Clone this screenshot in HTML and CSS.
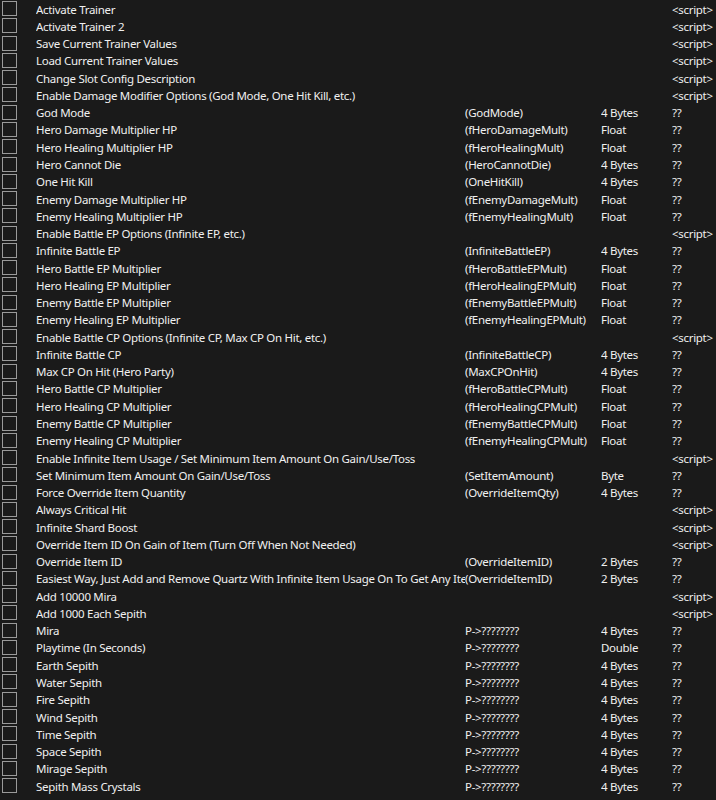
FILE: index.html
```
<!DOCTYPE html>
<html>
<head>
<meta charset="utf-8">
<link rel="stylesheet" href="styles.css">
</head>
<body>
<div class="table" id="t"></div>
<script src="app.js"></script>
</body>
</html>
```
FILE: styles.css
```
html, body {
  margin: 0;
  padding: 0;
  background: #1a1a1a;
}
body {
  width: 716px;
  height: 800px;
  overflow: hidden;
  font-family: "Noto Sans", "Open Sans", sans-serif;
  font-size: 11.5px;
  letter-spacing: -0.3px;
  color: #f0f0f0;
}
.table {
  display: flex;
  flex-direction: column;
}
.row {
  height: 17.27px;
  display: grid;
  grid-template-columns: 36px 429px 136px 71px 1fr;
  align-items: center;
  white-space: nowrap;
}
.cb {
  width: 13px;
  height: 13px;
  margin-left: 2px;
  border: 1px solid #9a9a9a;
  background: #1a1a1a;
}
.desc,
.cell {
  overflow: hidden;
  padding-top: 1px;
}
```
FILE: app.js
```
var rows = [
["Activate Trainer","","","<script>"],
["Activate Trainer 2","","","<script>"],
["Save Current Trainer Values","","","<script>"],
["Load Current Trainer Values","","","<script>"],
["Change Slot Config Description","","","<script>"],
["Enable Damage Modifier Options (God Mode, One Hit Kill, etc.)","","","<script>"],
["God Mode","(GodMode)","4 Bytes","??"],
["Hero Damage Multiplier HP","(fHeroDamageMult)","Float","??"],
["Hero Healing Multiplier HP","(fHeroHealingMult)","Float","??"],
["Hero Cannot Die","(HeroCannotDie)","4 Bytes","??"],
["One Hit Kill","(OneHitKill)","4 Bytes","??"],
["Enemy Damage Multiplier HP","(fEnemyDamageMult)","Float","??"],
["Enemy Healing Multiplier HP","(fEnemyHealingMult)","Float","??"],
["Enable Battle EP Options (Infinite EP, etc.)","","","<script>"],
["Infinite Battle EP","(InfiniteBattleEP)","4 Bytes","??"],
["Hero Battle EP Multiplier","(fHeroBattleEPMult)","Float","??"],
["Hero Healing EP Multiplier","(fHeroHealingEPMult)","Float","??"],
["Enemy Battle EP Multiplier","(fEnemyBattleEPMult)","Float","??"],
["Enemy Healing EP Multiplier","(fEnemyHealingEPMult)","Float","??"],
["Enable Battle CP Options (Infinite CP, Max CP On Hit, etc.)","","","<script>"],
["Infinite Battle CP","(InfiniteBattleCP)","4 Bytes","??"],
["Max CP On Hit (Hero Party)","(MaxCPOnHit)","4 Bytes","??"],
["Hero Battle CP Multiplier","(fHeroBattleCPMult)","Float","??"],
["Hero Healing CP Multiplier","(fHeroHealingCPMult)","Float","??"],
["Enemy Battle CP Multiplier","(fEnemyBattleCPMult)","Float","??"],
["Enemy Healing CP Multiplier","(fEnemyHealingCPMult)","Float","??"],
["Enable Infinite Item Usage / Set Minimum Item Amount On Gain/Use/Toss","","","<script>"],
["Set Minimum Item Amount On Gain/Use/Toss","(SetItemAmount)","Byte","??"],
["Force Override Item Quantity","(OverrideItemQty)","4 Bytes","??"],
["Always Critical Hit","","","<script>"],
["Infinite Shard Boost","","","<script>"],
["Override Item ID On Gain of Item (Turn Off When Not Needed)","","","<script>"],
["Override Item ID","(OverrideItemID)","2 Bytes","??"],
["Easiest Way, Just Add and Remove Quartz With Infinite Item Usage On To Get Any Item","(OverrideItemID)","2 Bytes","??"],
["Add 10000 Mira","","","<script>"],
["Add 1000 Each Sepith","","","<script>"],
["Mira","P->????????","4 Bytes","??"],
["Playtime (In Seconds)","P->????????","Double","??"],
["Earth Sepith","P->????????","4 Bytes","??"],
["Water Sepith","P->????????","4 Bytes","??"],
["Fire Sepith","P->????????","4 Bytes","??"],
["Wind Sepith","P->????????","4 Bytes","??"],
["Time Sepith","P->????????","4 Bytes","??"],
["Space Sepith","P->????????","4 Bytes","??"],
["Mirage Sepith","P->????????","4 Bytes","??"],
["Sepith Mass Crystals","P->????????","4 Bytes","??"]
];
var t = document.getElementById("t");
rows.forEach(function (r) {
  var row = document.createElement("div");
  row.className = "row";
  var c0 = document.createElement("div");
  var cb = document.createElement("div");
  cb.className = "cb";
  c0.appendChild(cb);
  row.appendChild(c0);
  var d = document.createElement("div");
  d.className = "desc";
  d.textContent = r[0];
  row.appendChild(d);
  for (var i = 1; i < 4; i++) {
    var c = document.createElement("div");
    c.className = "cell";
    c.textContent = r[i];
    row.appendChild(c);
  }
  t.appendChild(row);
});
```
